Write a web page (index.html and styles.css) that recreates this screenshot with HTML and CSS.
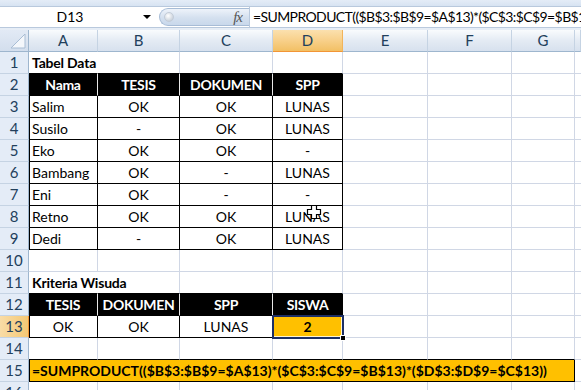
FILE: index.html
```html
<!DOCTYPE html>
<html>
<head>
	<meta charset="utf-8">
	<title>Kriteria Wisuda - SUMPRODUCT</title>
	<link rel="stylesheet" href="styles.css">
</head>
<body>
<div class="ribbon"></div>
<div class="fbar">
	<div class="namebox">D13</div>
	<div class="drop"><span class="tri"></span></div>
	<div class="pill"><span class="knob"></span><span class="fx">fx</span></div>
	<div class="formula">=SUMPRODUCT(($B$3:$B$9=$A$13)*($C$3:$C$9=$B$13)*($D$3:$D$9=$C$13))</div>
</div>
<div class="strip"></div>

<div class="sheet">
	<div class="row colhead">
		<div class="corner">
			<svg width="28" height="21" viewBox="0 0 28 21"><polygon points="25,4 25,18 11,18" fill="#f4f7fb" stroke="#a9bdd4" stroke-width="1"/></svg>
		</div>
		<div class="ch">A</div><div class="ch">B</div><div class="ch">C</div><div class="ch act">D</div><div class="ch">E</div><div class="ch">F</div><div class="ch">G</div><div class="ch"></div>
	</div>

	<div class="row">
		<div class="rh">1</div>
		<div class="c bd top spill">Tabel Data</div><div class="c top"></div><div class="c top"></div><div class="c top"></div><div class="c"></div><div class="c"></div><div class="c"></div><div class="c"></div>
	</div>
	<div class="row">
		<div class="rh">2</div>
		<div class="c th">Nama</div><div class="c th">TESIS</div><div class="c th">DOKUMEN</div><div class="c th last">SPP</div><div class="c"></div><div class="c"></div><div class="c"></div><div class="c"></div>
	</div>
	<div class="row">
		<div class="rh">3</div>
		<div class="c tb first">Salim</div><div class="c tb m">OK</div><div class="c tb m">OK</div><div class="c tb m">LUNAS</div><div class="c"></div><div class="c"></div><div class="c"></div><div class="c"></div>
	</div>
	<div class="row">
		<div class="rh">4</div>
		<div class="c tb first">Susilo</div><div class="c tb m">-</div><div class="c tb m">OK</div><div class="c tb m">LUNAS</div><div class="c"></div><div class="c"></div><div class="c"></div><div class="c"></div>
	</div>
	<div class="row">
		<div class="rh">5</div>
		<div class="c tb first">Eko</div><div class="c tb m">OK</div><div class="c tb m">OK</div><div class="c tb m">-</div><div class="c"></div><div class="c"></div><div class="c"></div><div class="c"></div>
	</div>
	<div class="row">
		<div class="rh">6</div>
		<div class="c tb first">Bambang</div><div class="c tb m">OK</div><div class="c tb m">-</div><div class="c tb m">LUNAS</div><div class="c"></div><div class="c"></div><div class="c"></div><div class="c"></div>
	</div>
	<div class="row">
		<div class="rh">7</div>
		<div class="c tb first">Eni</div><div class="c tb m">OK</div><div class="c tb m">-</div><div class="c tb m">-</div><div class="c"></div><div class="c"></div><div class="c"></div><div class="c"></div>
	</div>
	<div class="row">
		<div class="rh">8</div>
		<div class="c tb first">Retno</div><div class="c tb m">OK</div><div class="c tb m">OK</div><div class="c tb m">LUNAS</div><div class="c"></div><div class="c"></div><div class="c"></div><div class="c"></div>
	</div>
	<div class="row">
		<div class="rh">9</div>
		<div class="c tb first">Dedi</div><div class="c tb m">-</div><div class="c tb m">OK</div><div class="c tb m">LUNAS</div><div class="c"></div><div class="c"></div><div class="c"></div><div class="c"></div>
	</div>
	<div class="row">
		<div class="rh">10</div>
		<div class="c"></div><div class="c"></div><div class="c"></div><div class="c"></div><div class="c"></div><div class="c"></div><div class="c"></div><div class="c"></div>
	</div>
	<div class="row">
		<div class="rh">11</div>
		<div class="c bd top spill">Kriteria Wisuda</div><div class="c top"></div><div class="c top"></div><div class="c top"></div><div class="c"></div><div class="c"></div><div class="c"></div><div class="c"></div>
	</div>
	<div class="row">
		<div class="rh">12</div>
		<div class="c th">TESIS</div><div class="c th">DOKUMEN</div><div class="c th">SPP</div><div class="c th last">SISWA</div><div class="c"></div><div class="c"></div><div class="c"></div><div class="c"></div>
	</div>
	<div class="row">
		<div class="rh act">13</div>
		<div class="c tb first m">OK</div><div class="c tb m">OK</div><div class="c tb m">LUNAS</div><div class="c tb m bd sel">2<span class="handle"></span></div><div class="c"></div><div class="c"></div><div class="c"></div><div class="c"></div>
	</div>
	<div class="row">
		<div class="rh">14</div>
		<div class="c top"></div><div class="c top"></div><div class="c top"></div><div class="c top"></div><div class="c top"></div><div class="c top"></div><div class="c top"></div><div class="c"></div>
	</div>
	<div class="row">
		<div class="rh">15</div>
		<div class="c band">=SUMPRODUCT(($B$3:$B$9=$A$13)*($C$3:$C$9=$B$13)*($D$3:$D$9=$C$13))</div><div class="c"></div>
	</div>
	<div class="row">
		<div class="rh">16</div>
		<div class="c"></div><div class="c"></div><div class="c"></div><div class="c"></div><div class="c"></div><div class="c"></div><div class="c"></div><div class="c"></div>
	</div>

	<svg class="cursor" width="16" height="16" viewBox="0 0 16 16"><path d="M5.5 1.5h5v4h4v5h-4v4h-5v-4h-4v-5h4z" fill="#fff" stroke="#000" stroke-width="1.2"/></svg>
</div>
</body>
</html>
```

FILE: styles.css
```css
*{
	margin: 0;
	padding: 0;
	box-sizing: border-box;
}

body{
	width: 581px;
	height: 390px;
	overflow: hidden;
	background: #fff;
	font-family: Lato, "Liberation Sans", sans-serif;
	font-size: 14px;
	color: #000;
}

/* formula bar */
.ribbon{
	height: 6px;
	background: linear-gradient(#e4ecf7, #d7e3f2);
}
.fbar{
	display: flex;
	height: 22px;
	border-top: 1px solid #b9c9dd;
	border-bottom: 1px solid #b9c9dd;
	background: #fff;
}
.namebox{
	width: 140px;
	text-align: center;
	line-height: 20px;
}
.drop{
	width: 19px;
	display: flex;
	align-items: center;
	justify-content: center;
}
.tri{
	width: 0;
	height: 0;
	border-left: 4px solid transparent;
	border-right: 4px solid transparent;
	border-top: 4px solid #000;
	margin-left: -6px;
}
.pill{
	width: 90px;
	margin: 1px 0;
	display: flex;
	align-items: center;
	justify-content: space-between;
	padding: 0 7px 0 4px;
	border: 1px solid #a7bcd6;
	border-right: none;
	border-radius: 10px 0 0 10px;
	background: linear-gradient(#eef3fa, #d4e0ef 55%, #c9d8eb);
}
.knob{
	width: 10px;
	height: 10px;
	border-radius: 50%;
	background: radial-gradient(circle at 40% 35%, #fff, #b8c3d0);
	border: 1px solid #c3ccd8;
}
.fx{
	font-family: "Liberation Serif", serif;
	font-style: italic;
	font-size: 15px;
	color: #555;
	letter-spacing: -1px;
}
.formula{
	flex: 1;
	padding-left: 3px;
	line-height: 20px;
	font-size: 14px;
	letter-spacing: -0.6px;
	white-space: nowrap;
	overflow: hidden;
	border-left: 1px solid #b9c9dd;
}
.strip{
	height: 2px;
	background: #e6edf6;
}

/* sheet grid */
.sheet{
	position: relative;
}
.row{
	display: grid;
	grid-template-columns: 29px 69px 82px 93px 70px 85px 84px 63px 1fr;
	height: 22px;
}
.corner{
	background: linear-gradient(#e2eaf5, #d3deed);
	border-right: 1px solid #9eb6ce;
	border-bottom: 1px solid #9eb6ce;
}
.corner svg{
	display: block;
}
.ch{
	text-align: center;
	line-height: 21px;
	font-size: 15px;
	color: #22405c;
	background: linear-gradient(#f9fbfd, #e4ebf4 50%, #d7e1ee);
	border-right: 1px solid #c5d3e3;
	border-bottom: 1px solid #9eb6ce;
}
.ch.act{
	background: linear-gradient(#fbe0ae, #f8d08a 50%, #f2c064);
	border-bottom-color: #f29536;
	border-right-color: #f2b45a;
}
.rh{
	text-align: center;
	line-height: 21px;
	font-size: 15px;
	color: #22405c;
	background: #e4ecf7;
	border-right: 1px solid #9eb6ce;
	border-bottom: 1px solid #c5d3e3;
}
.rh.act{
	background: linear-gradient(90deg, #f9dca6, #f4c875);
	border-right-color: #f29536;
}

/* cells */
.c{
	padding: 0 3px;
	line-height: 21px;
	white-space: nowrap;
	border-right: 1px solid #d0d7e5;
	border-bottom: 1px solid #d0d7e5;
}
.m{
	text-align: center;
}
.bd{
	font-weight: bold;
	letter-spacing: -0.2px;
}
.top{
	border-bottom-color: #000;
}
.spill{
	border-right-color: transparent;
}
.th{
	background: #000;
	color: #fff;
	font-weight: bold;
	letter-spacing: -0.3px;
	text-align: center;
	border-right-color: #e8e8e8;
	border-bottom-color: #000;
}
.th.last{
	border-right-color: #000;
}
.tb{
	border-right-color: #000;
	border-bottom-color: #000;
}
.first{
	box-shadow: inset 1px 0 0 #000;
}
.sel{
	position: relative;
	background: #ffc000;
	box-shadow: inset 0 0 0 1px #fff5d0, 0 0 0 1px #1d2f66;
	outline: 1px solid #1d2f66;
	outline-offset: -1px;
}
.handle{
	position: absolute;
	right: -4px;
	bottom: -4px;
	width: 6px;
	height: 6px;
	background: #000;
	border: 1px solid #fff;
}
.band{
	grid-column: 2 / 9;
	font-weight: bold;
	background: #ffc000;
	border-right-color: #000;
	border-bottom-color: #000;
	box-shadow: inset 1px 0 0 #000;
}

/* mouse pointer */
.cursor{
	position: absolute;
	left: 306px;
	top: 174px;
}
```
